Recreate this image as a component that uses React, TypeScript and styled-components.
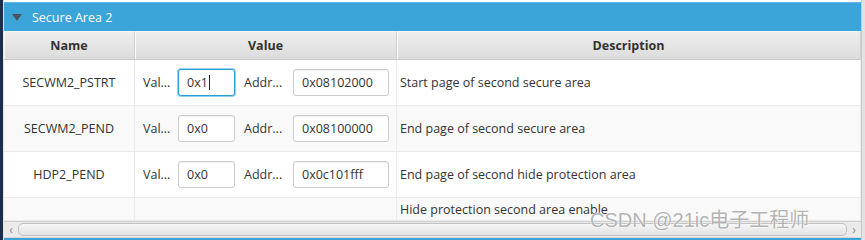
import React from 'react';
import styled, { createGlobalStyle } from 'styled-components';

const GlobalStyle = createGlobalStyle`
  html, body {
    margin: 0;
    padding: 0;
    background: #ffffff;
    font-family: "Open Sans", "Noto Sans", "DejaVu Sans", sans-serif;
    font-size: 12.5px;
    color: #333333;
  }
`;

const Screen = styled.div`
  display: flex;
  width: 865px;
  height: 240px;
  overflow: hidden;
  position: relative;
`;

const SideStrip = styled.div`
  width: 3px;
  background: #1f2d4c;
  flex-shrink: 0;
`;

const Panel = styled.div`
  display: flex;
  flex-direction: column;
  width: 857px;
  padding-top: 2px;
  background: #ffffff;
  border-left: 1px solid #dfe5ea;
`;

const RightRail = styled.div`
  flex: 1;
  background: #e2e2e2;
  border-left: 1px solid #c9c9c9;
`;

const TitleBar = styled.div`
  display: flex;
  align-items: center;
  gap: 10px;
  height: 28px;
  padding-left: 8px;
  background: #3ba5da;
  border-top: 1px solid #5fb6e2;
  color: #ffffff;
  font-size: 12.5px;
`;

const Arrow = styled.span`
  width: 0;
  height: 0;
  border-left: 5px solid transparent;
  border-right: 5px solid transparent;
  border-top: 7px solid #4a5560;
`;

const Grid = styled.div`
  display: grid;
  grid-template-columns: 131px 262px 1fr;
`;

const HeadCell = styled.div`
  height: 27px;
  display: flex;
  align-items: center;
  justify-content: center;
  font-weight: 700;
  color: #333333;
  background: linear-gradient(#eeeeee, #dcdcdc);
  border-top: 1px solid #f4f4f4;
  border-right: 1px solid #cfcfcf;
  border-bottom: 1px solid #c8c8c8;
  box-shadow: inset 1px 0 0 #fafafa;
`;

const Cell = styled.div<{ $odd?: boolean; $h: number; $align?: string; $pad?: number }>`
  height: ${(p) => p.$h}px;
  display: flex;
  align-items: center;
  justify-content: ${(p) => p.$align || 'flex-start'};
  padding-left: ${(p) => p.$pad || 0}px;
  background: ${(p) => (p.$odd ? '#f9f9f9' : '#ffffff')};
  border-right: 1px solid #ebebeb;
  border-bottom: 1px solid #ebebeb;
  box-sizing: border-box;
  white-space: nowrap;
  overflow: hidden;
`;

const FieldLabel = styled.span<{ $w: number }>`
  width: ${(p) => p.$w}px;
  flex-shrink: 0;
`;

const Field = styled.div<{ $w: number; $focused?: boolean }>`
  width: ${(p) => p.$w}px;
  height: 27px;
  box-sizing: border-box;
  display: flex;
  align-items: center;
  padding-left: 8px;
  border-radius: 3px;
  background: #ffffff;
  border: 1px solid ${(p) => (p.$focused ? '#2a9fd6' : '#cccccc')};
  box-shadow: ${(p) => (p.$focused ? '0 0 0 1px #8fd0ee' : 'inset 0 1px 1px #f0f0f0')};
  flex-shrink: 0;
`;

const Caret = styled.span`
  display: inline-block;
  width: 1px;
  height: 15px;
  background: #222;
  margin-left: 1px;
`;

const Spacer = styled.span`
  width: 9px;
  flex-shrink: 0;
`;

const ScrollBar = styled.div`
  display: flex;
  align-items: center;
  height: 15px;
  background: #eaeaea;
  border-top: 1px solid #cfcfcf;
  border-bottom: 1px solid #d8d8d8;
  color: #8a8a8a;
  font-size: 12px;
`;

const ScrollArrow = styled.span`
  width: 14px;
  text-align: center;
  flex-shrink: 0;
`;

const Thumb = styled.div`
  flex: 1;
  height: 11px;
  border: 1px solid #c2c2c2;
  border-radius: 5px;
  background: linear-gradient(#f6f6f6, #e2e2e2);
`;

const BottomBar = styled.div`
  flex: 1;
  background: #3ba5da;
`;

const Watermark = styled.div`
  position: absolute;
  left: 590px;
  top: 204px;
  font-family: "Liberation Sans", "Noto Sans CJK SC", sans-serif;
  font-size: 20px;
  color: rgba(160, 160, 160, 0.8);
  text-shadow: 0 0 2px #fff, 0 0 1px #fff;
  white-space: nowrap;
`;

type Row = { name: string; val?: string; addr?: string; desc: string; focused?: boolean; h: number };

const rows: Row[] = [
  { name: 'SECWM2_PSTRT', val: '0x1', addr: '0x08102000', desc: 'Start page of second secure area', focused: true, h: 46 },
  { name: 'SECWM2_PEND', val: '0x0', addr: '0x08100000', desc: 'End page of second secure area', h: 46 },
  { name: 'HDP2_PEND', val: '0x0', addr: '0x0c101fff', desc: 'End page of second hide protection area', h: 46 },
  { name: '', desc: 'Hide protection second area enable', h: 23 },
];

const App = () => {
  return (
    <>
      <GlobalStyle />
      <Screen>
        <SideStrip />
        <Panel>
          <TitleBar>
            <Arrow />
            Secure Area 2
          </TitleBar>
          <Grid>
            <HeadCell>Name</HeadCell>
            <HeadCell>Value</HeadCell>
            <HeadCell>Description</HeadCell>
            {rows.map((r, i) => (
              <React.Fragment key={i}>
                <Cell $odd={i % 2 === 1} $h={r.h} $align="center">{r.name}</Cell>
                <Cell $odd={i % 2 === 1} $h={r.h} $pad={8}>
                  {r.val !== undefined && (
                    <>
                      <FieldLabel $w={35}>Val...</FieldLabel>
                      <Field $w={57} $focused={r.focused}>
                        {r.val}
                        {r.focused && <Caret />}
                      </Field>
                      <Spacer />
                      <FieldLabel $w={49}>Addr...</FieldLabel>
                      <Field $w={96}>{r.addr}</Field>
                    </>
                  )}
                </Cell>
                <Cell $odd={i % 2 === 1} $h={r.h} $pad={3}>{r.desc}</Cell>
              </React.Fragment>
            ))}
          </Grid>
          <ScrollBar>
            <ScrollArrow>&lsaquo;</ScrollArrow>
            <Thumb />
            <ScrollArrow>&rsaquo;</ScrollArrow>
          </ScrollBar>
          <BottomBar />
        </Panel>
        <RightRail />
        <Watermark>CSDN @21ic电子工程师</Watermark>
      </Screen>
    </>
  );
};

export default App;
